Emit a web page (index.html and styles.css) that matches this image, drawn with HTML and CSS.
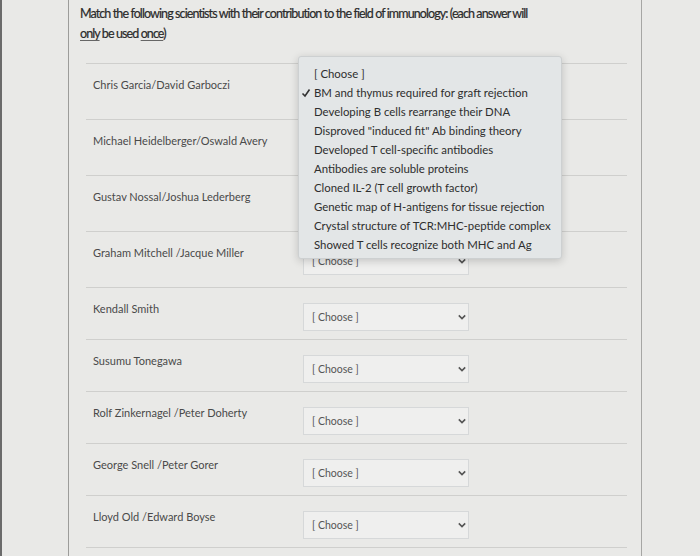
FILE: index.html
```html
<!DOCTYPE html>
<html>
<head>
<meta charset="utf-8">
<link rel="stylesheet" href="styles.css">
</head>
<body>
<div class="page">
  <div class="edge"></div>
  <div class="card">
    <p class="title">Match the following scientists with their contribution to the field of immunology: (each answer will<br><u>only</u> be used <u>once</u>)</p>
    <div class="rows">
      <div class="row tall">
        <div class="name">Chris Garcia/David Garboczi</div>
        <div class="field"></div>
      </div>
      <div class="row tall">
        <div class="name">Michael Heidelberger/Oswald Avery</div>
        <div class="field"></div>
      </div>
      <div class="row tall">
        <div class="name">Gustav Nossal/Joshua Lederberg</div>
        <div class="field"></div>
      </div>
      <div class="row tall">
        <div class="name">Graham Mitchell /Jacque Miller</div>
        <div class="field">
          <div class="select open"><span>[ Choose ]</span><svg class="chev" viewBox="0 0 10 6"><path d="M1 1l4 4 4-4"/></svg>
            <ul class="menu">
              <li>[ Choose ]</li>
              <li class="checked"><svg class="check" viewBox="0 0 10 10"><path d="M1.5 5.5l2.5 2.5 4.5-6.5"/></svg>BM and thymus required for graft rejection</li>
              <li>Developing B cells rearrange their DNA</li>
              <li>Disproved "induced fit" Ab binding theory</li>
              <li>Developed T cell-specific antibodies</li>
              <li>Antibodies are soluble proteins</li>
              <li>Cloned IL-2 (T cell growth factor)</li>
              <li>Genetic map of H-antigens for tissue rejection</li>
              <li>Crystal structure of TCR:MHC-peptide complex</li>
              <li>Showed T cells recognize both MHC and Ag</li>
            </ul>
          </div>
        </div>
      </div>
      <div class="row">
        <div class="name">Kendall Smith</div>
        <div class="field"><div class="select"><span>[ Choose ]</span><svg class="chev" viewBox="0 0 10 6"><path d="M1 1l4 4 4-4"/></svg></div></div>
      </div>
      <div class="row">
        <div class="name">Susumu Tonegawa</div>
        <div class="field"><div class="select"><span>[ Choose ]</span><svg class="chev" viewBox="0 0 10 6"><path d="M1 1l4 4 4-4"/></svg></div></div>
      </div>
      <div class="row">
        <div class="name">Rolf Zinkernagel /Peter Doherty</div>
        <div class="field"><div class="select"><span>[ Choose ]</span><svg class="chev" viewBox="0 0 10 6"><path d="M1 1l4 4 4-4"/></svg></div></div>
      </div>
      <div class="row">
        <div class="name">George Snell /Peter Gorer</div>
        <div class="field"><div class="select"><span>[ Choose ]</span><svg class="chev" viewBox="0 0 10 6"><path d="M1 1l4 4 4-4"/></svg></div></div>
      </div>
      <div class="row">
        <div class="name">Lloyd Old /Edward Boyse</div>
        <div class="field"><div class="select"><span>[ Choose ]</span><svg class="chev" viewBox="0 0 10 6"><path d="M1 1l4 4 4-4"/></svg></div></div>
      </div>
    </div>
  </div>
</div>
</body>
</html>
```
FILE: styles.css
```css
html, body {
  margin: 0;
  padding: 0;
  background: #e9e9e7;
  height: 100%;
  overflow: hidden;
}
.page {
  display: flex;
  height: 556px;
  font-family: Lato, "Liberation Sans", sans-serif;
}
.edge {
  width: 2px;
  background: #6b6b6b;
  flex: none;
}
.card {
  margin-left: 66px;
  width: 574px;
  border-left: 1px solid #9c9c9a;
  border-right: 1px solid #a6a6a4;
  padding: 0 14px 0 17px;
  box-sizing: border-box;
}
.title {
  margin: 4px 0 19px -6px;
  font-size: 12.5px;
  line-height: 20px;
  color: #2a2a2a;
  letter-spacing: -0.9px;
  word-spacing: 0;
  -webkit-text-stroke: 0.2px #2a2a2a;
}
.title u {
  text-decoration-color: #666;
  text-underline-offset: 2px;
}
.rows {
  border-bottom: 1px solid #cfcfcd;
}
.row {
  display: grid;
  grid-template-columns: 217px 166px;
  height: 52px;
  box-sizing: border-box;
  border-top: 1px solid #cfcfcd;
  padding-top: 13px;
}
.row.tall {
  height: 56px;
}
.name {
  padding-left: 7px;
  font-size: 11px;
  line-height: 16px;
  color: #4a4a4a;
}
.field {
  padding-top: 2px;
}
.select {
  position: relative;
  height: 28px;
  box-sizing: border-box;
  border: 1px solid #d6d8d9;
  background: #efefee;
  display: flex;
  align-items: center;
  justify-content: space-between;
  padding: 0 2px 0 8px;
  font-size: 10.5px;
  color: #555;
}
.chev {
  width: 8px;
  height: 6px;
  fill: none;
  stroke: #555;
  stroke-width: 2;
}
.menu {
  position: absolute;
  left: -6px;
  bottom: 15px;
  width: 264px;
  margin: 0;
  padding: 7px 0 4px 0;
  list-style: none;
  background: #e3e6e7;
  border: 1px solid #cdd0d1;
  border-radius: 3px;
  box-shadow: 0 2px 8px rgba(0, 0, 0, 0.18);
  box-sizing: border-box;
  z-index: 5;
}
.menu li {
  position: relative;
  padding-left: 15px;
  font-size: 11.4px;
  line-height: 19px;
  color: #2e2e2e;
  white-space: nowrap;
}
.check {
  position: absolute;
  left: 2px;
  top: 5px;
  width: 10px;
  height: 10px;
  fill: none;
  stroke: #333;
  stroke-width: 1.6;
}
```
